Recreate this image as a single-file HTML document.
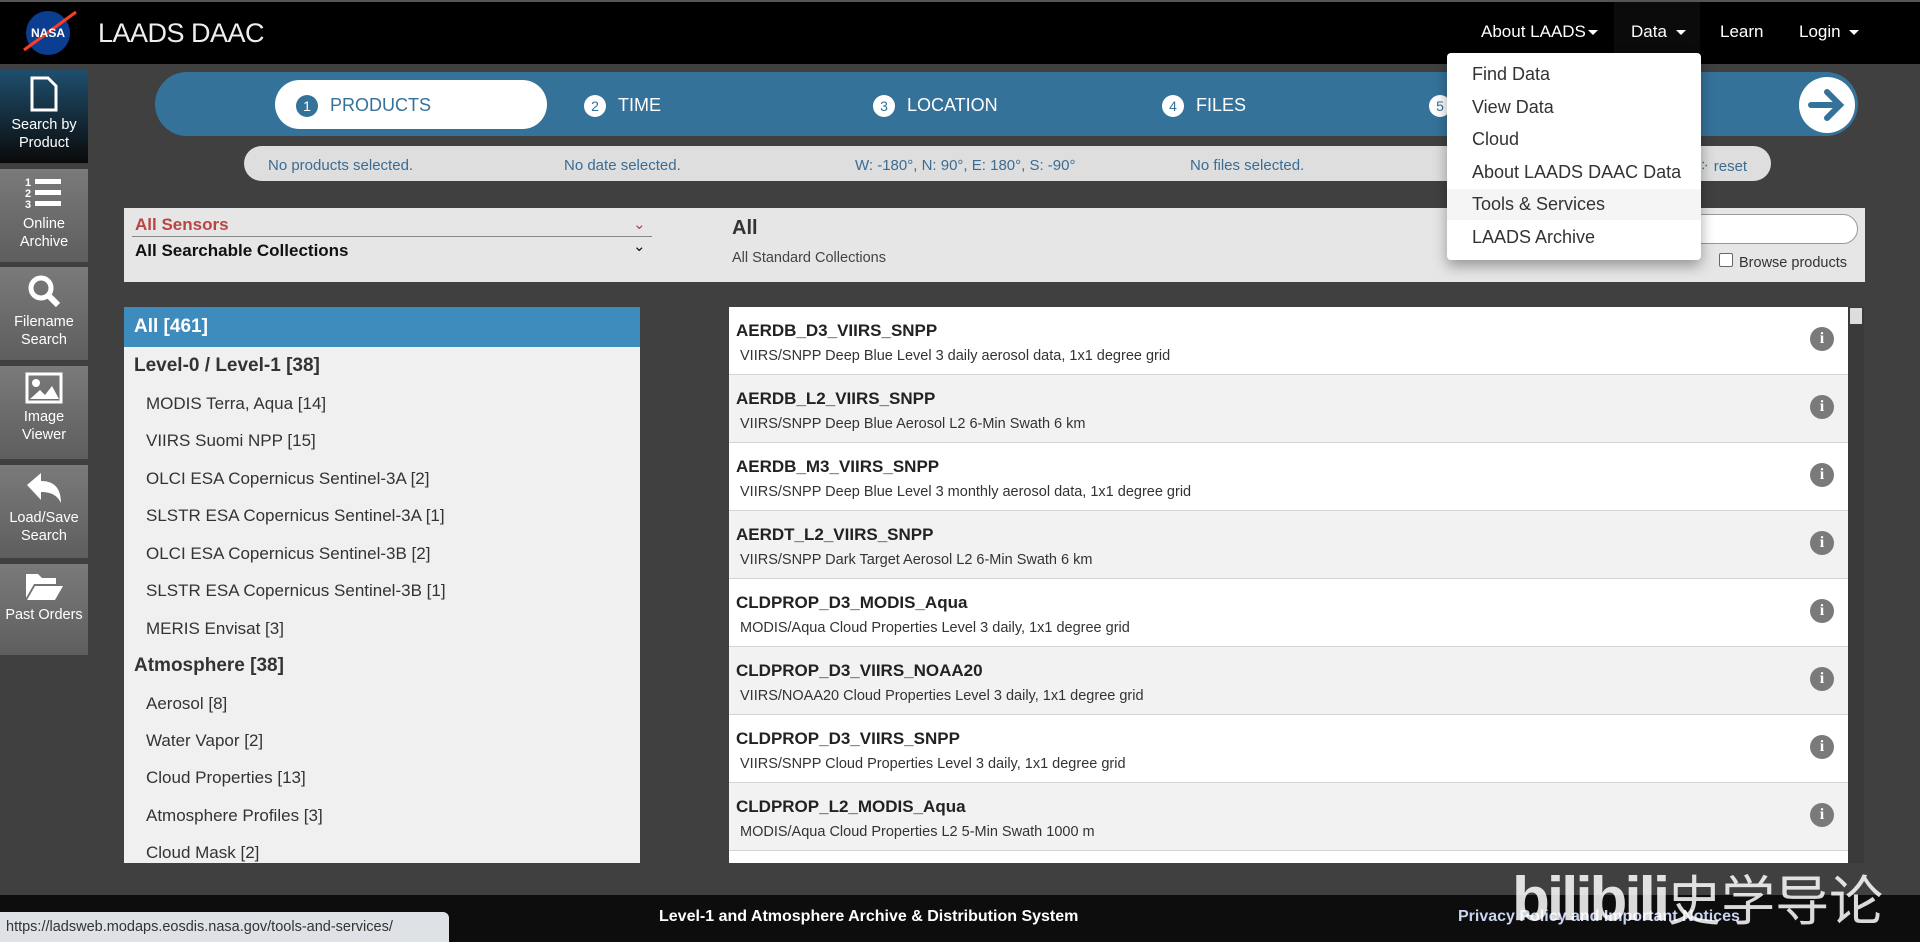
<!DOCTYPE html>
<html style="overflow:hidden;width:1920px;height:942px"><head><meta charset="utf-8"><style>
*{box-sizing:border-box;margin:0;padding:0}
body{width:1920px;height:942px;overflow:hidden;background:#404040;font-family:"Liberation Sans",Arial,sans-serif;position:relative}
.abs{position:absolute}
#hdr{left:0;top:0;width:1920px;height:64px;background:#000;border-top:2px solid #555}
.nav{color:#fff;font-size:17px;top:20px}
.caret{display:inline-block;width:0;height:0;border-left:5px solid transparent;border-right:5px solid transparent;border-top:5px solid #fff;vertical-align:middle;margin-left:4px}
.sb{left:0;width:88px;color:#fff;font-size:14.5px;text-align:center;line-height:18px;background:linear-gradient(#7a7a7a,#5e5e5e)}
.sb svg{display:block;margin:6px auto 4px}
#steps{left:155px;top:72px;width:1703px;height:64px;background:#35729a;border-radius:32px}
.st{color:#fff;font-size:18px;top:95px}
.num{display:inline-block;width:22px;height:22px;border-radius:50%;background:#fff;color:#35729a;font-size:14px;text-align:center;line-height:22px;margin-right:12px;vertical-align:middle}
#sum{left:244px;top:146px;width:1527px;height:35px;background:#dedede;border-radius:18px}
.sm{color:#3b6c93;font-size:15px;top:157px}
#flt{left:124px;top:208px;width:1741px;height:74px;background:#e6e6e6}
#ll{left:124px;top:307px;width:516px;height:556px;background:#f0f0f0;overflow:hidden}
.li{position:absolute;left:0;width:516px;font-size:17px;color:#333;height:37px;line-height:37px}
#rl{left:729px;top:307px;width:1119px;height:556px;background:#fff;overflow:hidden}
.ri{position:absolute;left:0;width:1119px;height:68px;border-bottom:1px solid #d5d5d5}
.ri b{position:absolute;left:7px;top:14px;font-size:17px;color:#222}
.ri span{position:absolute;left:11px;top:41px;font-size:14.5px;color:#333}
.ri i{position:absolute;right:14px;top:20px;width:24px;height:24px;border-radius:50%;background:#7a7a7a;color:#fff;font-style:normal;font-weight:bold;font-family:"Liberation Serif",serif;font-size:16px;text-align:center;line-height:24px}
#dd{left:1447px;top:53px;width:254px;height:207px;background:#fff;border-radius:4px;box-shadow:0 6px 14px rgba(0,0,0,.35)}
.di{position:absolute;left:0;width:254px;height:31px;line-height:31px;padding-left:25px;font-size:18px;color:#333}
#ft{left:0;top:895px;width:1920px;height:47px;background:#0d0d0d}
</style></head><body>
<div id="hdr" class="abs">
 <svg class="abs" style="left:20px;top:4px" width="58" height="52" viewBox="0 0 58 52"><circle cx="28" cy="27" r="22" fill="#0b3d91"/><path d="M4 44 L56 6" stroke="#fc3d21" stroke-width="3"/><text x="28" y="31" fill="#fff" font-size="12" font-weight="bold" text-anchor="middle" font-family="Liberation Sans">NASA</text></svg>
 <div class="abs" style="left:98px;top:16px;color:#eee;font-size:27px;font-weight:300;letter-spacing:-0.5px">LAADS DAAC</div>
 <div class="abs nav" style="left:1481px">About LAADS<span class="caret" style="margin-left:2px"></span></div>
 <div class="abs" style="left:1614px;top:0;width:86px;height:62px;background:#0b0b0b"></div>
 <div class="abs nav" style="left:1631px">Data <span class="caret"></span></div>
 <div class="abs nav" style="left:1720px">Learn</div>
 <div class="abs nav" style="left:1799px">Login <span class="caret"></span></div>
</div>
<div class="abs sb" style="top:70px;height:93px;background:linear-gradient(#1f4f6e,#0a0a0a)"><svg width="30" height="36" viewBox="0 0 30 36"><path d="M3 2h16l8 8v24H3z" fill="none" stroke="#fff" stroke-width="3"/></svg>Search by<br>Product</div>
<div class="abs sb" style="top:169px;height:93px"><svg width="40" height="36" viewBox="0 0 40 36"><text x="1" y="11" fill="#fff" font-size="11" font-weight="bold">1</text><text x="1" y="22" fill="#fff" font-size="11" font-weight="bold">2</text><text x="1" y="33" fill="#fff" font-size="11" font-weight="bold">3</text><rect x="11" y="4" width="26" height="5" fill="#fff"/><rect x="11" y="15" width="26" height="5" fill="#fff"/><rect x="11" y="26" width="26" height="5" fill="#fff"/></svg>Online<br>Archive</div>
<div class="abs sb" style="top:267px;height:93px"><svg width="36" height="36" viewBox="0 0 36 36"><circle cx="15" cy="15" r="10" fill="none" stroke="#fff" stroke-width="5"/><path d="M22 22l10 10" stroke="#fff" stroke-width="6"/></svg>Filename<br>Search</div>
<div class="abs sb" style="top:366px;height:93px"><svg width="38" height="32" viewBox="0 0 38 32"><rect x="2" y="2" width="34" height="28" fill="none" stroke="#fff" stroke-width="3"/><circle cx="11" cy="11" r="4" fill="#fff"/><path d="M5 27l10-9 5 5 7-9 7 13z" fill="#fff"/></svg>Image<br>Viewer</div>
<div class="abs sb" style="top:465px;height:93px"><svg width="38" height="34" viewBox="0 0 38 34"><path d="M2 14L16 2v8c12 0 20 6 20 22-4-8-10-11-20-11v8z" fill="#fff"/></svg>Load/Save<br>Search</div>
<div class="abs sb" style="top:564px;height:91px"><svg width="40" height="32" viewBox="0 0 40 32"><path d="M2 4h12l4 4h14v6H10L2 28z" fill="#fff"/><path d="M11 16h28l-8 14H3z" fill="#fff"/></svg>Past Orders</div>

<div id="steps" class="abs"></div>
<div class="abs" style="left:275px;top:80px;width:272px;height:49px;background:#fff;border-radius:25px"></div>
<div class="abs st" style="left:296px;color:#35729a"><span class="num" style="background:#35729a;color:#fff">1</span>PRODUCTS</div>
<div class="abs st" style="left:584px"><span class="num">2</span>TIME</div>
<div class="abs st" style="left:873px"><span class="num">3</span>LOCATION</div>
<div class="abs st" style="left:1162px"><span class="num">4</span>FILES</div>
<div class="abs st" style="left:1429px"><span class="num">5</span></div>
<svg class="abs" style="left:1797px;top:75px" width="60" height="60" viewBox="0 0 60 60"><circle cx="30" cy="30" r="28" fill="#fff"/><path d="M14 30h28M30 17l13 13-13 13" stroke="#35729a" stroke-width="6" fill="none" stroke-linecap="round"/></svg>

<div id="sum" class="abs"></div>
<div class="abs sm" style="left:268px">No products selected.</div>
<div class="abs sm" style="left:564px">No date selected.</div>
<div class="abs sm" style="left:855px">W: -180°, N: 90°, E: 180°, S: -90°</div>
<div class="abs sm" style="left:1190px">No files selected.</div>
<div class="abs sm" style="left:1697px">⁘ reset</div>

<div id="flt" class="abs"></div>
<div class="abs" style="left:135px;top:215px;color:#b84545;font-size:17px;font-weight:bold">All Sensors</div>
<div class="abs" style="left:633px;top:215px;color:#b84545;font-size:15px">&#8964;</div>
<div class="abs" style="left:132px;top:236px;width:520px;height:1px;background:#888"></div>
<div class="abs" style="left:135px;top:241px;color:#111;font-size:17px;font-weight:bold">All Searchable Collections</div>
<div class="abs" style="left:633px;top:237px;color:#111;font-size:15px">&#8964;</div>
<div class="abs" style="left:732px;top:217px;color:#333;font-size:20px;font-weight:bold">All</div>
<div class="abs" style="left:732px;top:250px;color:#444;font-size:14.5px">All Standard Collections</div>
<div class="abs" style="left:1640px;top:214px;width:218px;height:30px;background:#fff;border:1px solid #999;border-radius:15px"></div>
<div class="abs" style="left:1719px;top:253px;width:14px;height:14px;border:1px solid #666;background:#fff;border-radius:2px"></div>
<div class="abs" style="left:1739px;top:255px;color:#333;font-size:14.5px">Browse products</div>

<div id="ll" class="abs">
 <div class="li" style="top:0;height:40px;line-height:40px;background:#3e8bbd;color:#fff;font-weight:bold;padding-left:10px;font-size:19px">All [461]</div>
 <div class="li" style="top:40px;padding-left:10px;font-weight:bold;font-size:19px">Level-0 / Level-1 [38]</div>
 <div class="li" style="top:78px;padding-left:22px">MODIS Terra, Aqua [14]</div>
 <div class="li" style="top:115px;padding-left:22px">VIIRS Suomi NPP [15]</div>
 <div class="li" style="top:153px;padding-left:22px">OLCI ESA Copernicus Sentinel-3A [2]</div>
 <div class="li" style="top:190px;padding-left:22px">SLSTR ESA Copernicus Sentinel-3A [1]</div>
 <div class="li" style="top:228px;padding-left:22px">OLCI ESA Copernicus Sentinel-3B [2]</div>
 <div class="li" style="top:265px;padding-left:22px">SLSTR ESA Copernicus Sentinel-3B [1]</div>
 <div class="li" style="top:303px;padding-left:22px">MERIS Envisat [3]</div>
 <div class="li" style="top:340px;padding-left:10px;font-weight:bold;font-size:19px">Atmosphere [38]</div>
 <div class="li" style="top:378px;padding-left:22px">Aerosol [8]</div>
 <div class="li" style="top:415px;padding-left:22px">Water Vapor [2]</div>
 <div class="li" style="top:452px;padding-left:22px">Cloud Properties [13]</div>
 <div class="li" style="top:490px;padding-left:22px">Atmosphere Profiles [3]</div>
 <div class="li" style="top:527px;padding-left:22px">Cloud Mask [2]</div>
</div>

<div id="rl" class="abs">
 <div class="ri" style="top:0"><b>AERDB_D3_VIIRS_SNPP</b><span>VIIRS/SNPP Deep Blue Level 3 daily aerosol data, 1x1 degree grid</span><i>i</i></div>
 <div class="ri" style="top:68px;background:#f2f2f2"><b>AERDB_L2_VIIRS_SNPP</b><span>VIIRS/SNPP Deep Blue Aerosol L2 6-Min Swath 6 km</span><i>i</i></div>
 <div class="ri" style="top:136px"><b>AERDB_M3_VIIRS_SNPP</b><span>VIIRS/SNPP Deep Blue Level 3 monthly aerosol data, 1x1 degree grid</span><i>i</i></div>
 <div class="ri" style="top:204px;background:#f2f2f2"><b>AERDT_L2_VIIRS_SNPP</b><span>VIIRS/SNPP Dark Target Aerosol L2 6-Min Swath 6 km</span><i>i</i></div>
 <div class="ri" style="top:272px"><b>CLDPROP_D3_MODIS_Aqua</b><span>MODIS/Aqua Cloud Properties Level 3 daily, 1x1 degree grid</span><i>i</i></div>
 <div class="ri" style="top:340px;background:#f2f2f2"><b>CLDPROP_D3_VIIRS_NOAA20</b><span>VIIRS/NOAA20 Cloud Properties Level 3 daily, 1x1 degree grid</span><i>i</i></div>
 <div class="ri" style="top:408px"><b>CLDPROP_D3_VIIRS_SNPP</b><span>VIIRS/SNPP Cloud Properties Level 3 daily, 1x1 degree grid</span><i>i</i></div>
 <div class="ri" style="top:476px;background:#f2f2f2"><b>CLDPROP_L2_MODIS_Aqua</b><span>MODIS/Aqua Cloud Properties L2 5-Min Swath 1000 m</span><i>i</i></div>
</div>
<div class="abs" style="left:1848px;top:307px;width:16px;height:556px;background:#3a3a3a"></div>
<div class="abs" style="left:1850px;top:308px;width:12px;height:16px;background:#ddd"></div>

<div id="dd" class="abs">
 <div class="di" style="top:6px">Find Data</div>
 <div class="di" style="top:39px">View Data</div>
 <div class="di" style="top:71px">Cloud</div>
 <div class="di" style="top:104px">About LAADS DAAC Data</div>
 <div class="di" style="top:136px;background:#f5f5f5">Tools &amp; Services</div>
 <div class="di" style="top:169px">LAADS Archive</div>
</div>

<div id="ft" class="abs"></div>
<div class="abs" style="left:659px;top:908px;color:#fff;font-size:16px;font-weight:bold">Level-1 and Atmosphere Archive &amp; Distribution System</div>
<div class="abs" style="left:1458px;top:908px;color:#c9d4f0;font-size:16px;font-weight:bold">Privacy Policy and Important Notices</div>
<div class="abs" style="left:1512px;top:858px;width:408px;height:84px;overflow:hidden;white-space:nowrap;color:rgba(255,255,255,.85);line-height:84px;font-family:'Liberation Sans','Noto Sans CJK SC',sans-serif"><span style="font-size:62px;font-weight:bold;letter-spacing:-3px">bilibili</span><span style="font-size:54px">史学导论</span></div>
<div class="abs" style="left:0;top:912px;width:449px;height:30px;background:#dee1e6;border-top-right-radius:6px;color:#333;font-size:14.5px;line-height:30px;padding-left:6px;white-space:nowrap">https://ladsweb.modaps.eosdis.nasa.gov/tools-and-services/</div>
</body></html>
